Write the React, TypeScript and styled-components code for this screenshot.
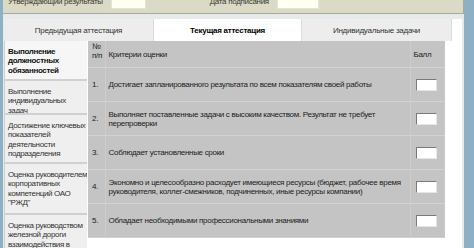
import React from 'react'
import styled, { createGlobalStyle } from 'styled-components'

const GlobalStyle = createGlobalStyle`
  body {
    margin: 0;
    background: #8eb0c4;
    font-family: "Liberation Sans", Arial, sans-serif;
    overflow: hidden;
  }
`;

// line breaks follow the narrow left column of the original page
const sections = [
  { title: 'Выполнение\nдолжностных\nобязанностей', active: true, h: 40 },
  { title: 'Выполнение\nиндивидуальных\nзадач', active: false, h: 34 },
  { title: 'Достижение ключевых\nпоказателей\nдеятельности\nподразделения', active: false, h: 49 },
  { title: 'Оценка руководителем\nкорпоративных\nкомпетенций ОАО\n"РЖД"', active: false, h: 51 },
  { title: 'Оценка руководством\nжелезной дороги\nвзаимодействия в\nрамках', active: false, h: 40 },
];

const criteria = [
  'Достигает запланированного результата по всем показателям своей работы',
  'Выполняет поставленные задачи с высоким качеством. Результат не требует перепроверки',
  'Соблюдает установленные сроки',
  'Экономно и целесообразно расходует имеющиеся ресурсы (бюджет, рабочее время руководителя, коллег-смежников, подчиненных, иные ресурсы компании)',
  'Обладает необходимыми профессиональными знаниями',
];

const tabs = [
  { label: 'Предыдущая аттестация', active: false, w: 150 },
  { label: 'Текущая аттестация', active: true, w: 148 },
  { label: 'Индивидуальные задачи', active: false, w: 150 },
];

const App: React.FC = () => {
  return (
    <>
      <GlobalStyle />
      <Page>
        <TopPanel>
          <Fields>
            <FieldLabel>Утверждающий результаты</FieldLabel>
            <FieldInput $w={35} $ml={8} />
            <FieldLabel $ml={64}>Дата подписания</FieldLabel>
            <FieldInput $w={42} $ml={8} />
          </Fields>
        </TopPanel>
        <Content>
          <TabBar>
            {tabs.map((t) => (
              <Tab key={t.label} $active={t.active} $w={t.w}>{t.label}</Tab>
            ))}
          </TabBar>
          <Body>
            <Sidebar>
              {sections.map((s) => (
                <SideItem key={s.title} $active={s.active} $h={s.h}>{s.title}</SideItem>
              ))}
            </Sidebar>
            <Table>
              <colgroup>
                <col style={{ width: 17 }} />
                <col style={{ width: 305 }} />
                <col style={{ width: 35 }} />
              </colgroup>
              <thead>
                <tr>
                  <NumHead>№<br />п/п</NumHead>
                  <HeadCell>Критерии оценки</HeadCell>
                  <HeadCell>Балл</HeadCell>
                </tr>
              </thead>
              <tbody>
                {criteria.map((c, i) => (
                  <Row key={i}>
                    <NumCell>{i + 1}.</NumCell>
                    <TextCell>{c}</TextCell>
                    <ScoreCell><ScoreInput /></ScoreCell>
                  </Row>
                ))}
              </tbody>
            </Table>
          </Body>
        </Content>
      </Page>
    </>
  )
}

export default App

const Page = styled.div`
  margin-left: 3px;
  width: 461px;
  min-height: 248px;
  background: #e6eaeb;
`;

const TopPanel = styled.div`
  height: 14px;
  box-sizing: border-box;
  background: #dadac6;
  border-bottom: 1px solid #a9a99a;
  border-right: 1px solid #a9a99a;
  overflow: hidden;
  padding-left: 5px;
`;

const Fields = styled.div`
  display: flex;
  align-items: center;
  height: 14px;
  margin-top: -6px;
`;

const FieldLabel = styled.span<{ $ml?: number }>`
  font-size: 8px;
  letter-spacing: -0.3px;
  color: #3a3a30;
  margin-left: ${({ $ml }) => $ml ?? 0}px;
  white-space: nowrap;
`;

const FieldInput = styled.div<{ $w: number; $ml: number }>`
  width: ${({ $w }) => $w}px;
  height: 16px;
  margin-left: ${({ $ml }) => $ml}px;
  background: #fffff2;
  border: 1px solid #e4e4d4;
  box-sizing: border-box;
`;

const Content = styled.div`
  margin: 5px 0 0 1px;
  width: 458px;
  min-height: 229px;
  background: #fff;
`;

const TabBar = styled.div`
  display: flex;
  height: 22px;
`;

const Tab = styled.div<{ $active: boolean; $w: number }>`
  width: ${({ $w }) => $w}px;
  display: flex;
  align-items: center;
  justify-content: center;
  font-size: 8px;
  letter-spacing: -0.25px;
  font-weight: ${({ $active }) => ($active ? 700 : 400)};
  color: ${({ $active }) => ($active ? '#000' : '#333')};
  background: ${({ $active }) => ($active ? '#fff' : '#ededed')};
  border-right: 1px solid #dcdcdc;
  box-sizing: border-box;
`;

const Body = styled.div`
  display: flex;
  gap: 1px;
`;

const Sidebar = styled.div`
  width: 83px;
  display: flex;
  flex-direction: column;
  border-left: 1px solid #cfcfcf;
  box-sizing: border-box;
`;

const SideItem = styled.div<{ $active: boolean; $h: number }>`
  height: ${({ $h }) => $h}px;
  flex-shrink: 0;
  box-sizing: border-box;
  padding: 6px 0 0 3px;
  font-size: 8px;
  letter-spacing: -0.35px;
  line-height: 9.3px;
  white-space: pre;
  font-weight: ${({ $active }) => ($active ? 700 : 400)};
  color: ${({ $active }) => ($active ? '#111' : '#333')};
  background: ${({ $active }) => ($active ? '#f6f6f6' : '#efefef')};
  border-bottom: 2px solid #d0d0d0;
  overflow: hidden;
`;

const Table = styled.table`
  width: 357px;
  border-collapse: collapse;
  table-layout: fixed;
  background: #c4c4c4;
  font-size: 8px;
  letter-spacing: -0.3px;
  color: #222;
  align-self: flex-start;
`;

const HeadCell = styled.th`
  height: 26px;
  padding: 0 0 0 3px;
  font-weight: 400;
  text-align: left;
  vertical-align: middle;
  border-bottom: 1px solid #d2d2d2;
  border-left: 1px solid #cdcdcd;
`;

const NumHead = styled.th`
  padding: 1px 0 0 4px;
  font-weight: 400;
  text-align: left;
  vertical-align: top;
  line-height: 9px;
  border-bottom: 1px solid #d2d2d2;
`;

const Row = styled.tr`
  height: 34px;
  border-bottom: 1px solid #d2d2d2;
`;

const NumCell = styled.td`
  padding: 0 0 0 4px;
  vertical-align: middle;
`;

const TextCell = styled.td`
  padding: 0 0 0 3px;
  line-height: 9px;
  vertical-align: middle;
  border-left: 1px solid #cdcdcd;
`;

const ScoreCell = styled.td`
  padding: 0 0 0 5px;
  vertical-align: middle;
  border-left: 1px solid #cdcdcd;
`;

const ScoreInput = styled.div`
  width: 21px;
  height: 12px;
  box-sizing: border-box;
  background: #fff;
  border-top: 1px solid #7a7a7a;
  border-left: 1px solid #7a7a7a;
  border-bottom: 1px solid #e6e6e6;
  border-right: 1px solid #e6e6e6;
`;
